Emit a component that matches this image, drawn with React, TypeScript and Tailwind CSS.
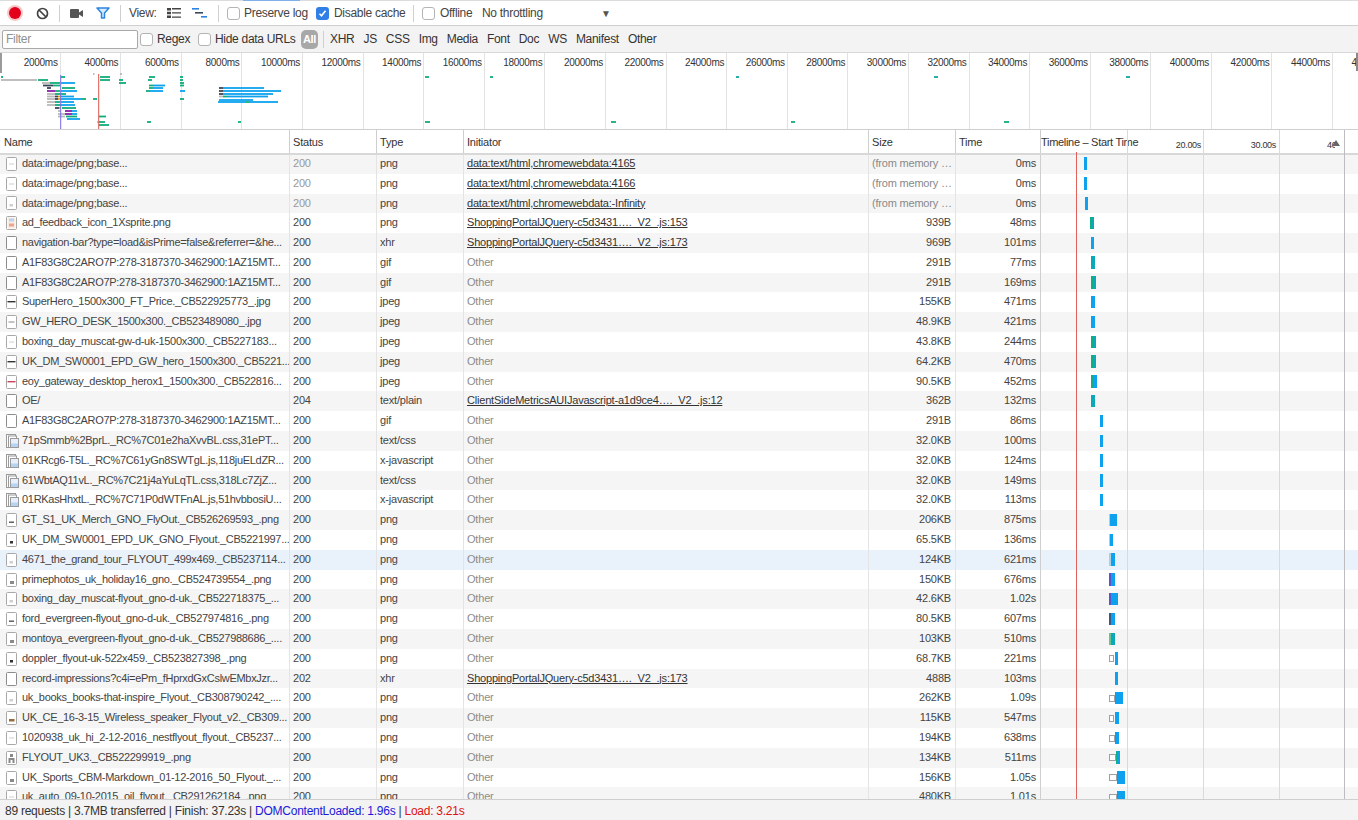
import React from 'react';

type Thumb = 'blank' | 'faint' | 'dash' | 'dark' | 'red' | 'sprite' | 'stack' | 'low' | 'mid' | 'dot' | 'bar' | 'orange' | 'person';
type Seg = [number, number, 'blue' | 'green' | 'teal' | 'purple' | 'dark' | 'pale' | 'box' | 'boxg'];

interface Req {
  name: string;
  status: string;
  type: string;
  initiator: string;
  size: string;
  time: string;
  thumb: Thumb;
  bars: Seg[];
}

const segClass = {
  blue: 'top-[3.5px] h-[12.5px] bg-[#0ea2ee]',
  green: 'top-[3.5px] h-[12.5px] bg-[#12ad80]',
  teal: 'top-[3.5px] h-[12.5px] bg-[#0aa8b8]',
  purple: 'top-[3.5px] h-[12.5px] bg-[#5a55c8]',
  dark: 'top-[3.5px] h-[12.5px] bg-[#3d5a80]',
  pale: 'top-[3.5px] h-[12.5px] bg-[#a9cfe0]',
  box: 'top-[6.5px] h-[7px] bg-white border border-[#a0a0a0]',
  boxg: 'top-[3.5px] h-[12.5px] bg-white border border-[#6cc08f]',
};

const shop153 = 'ShoppingPortalJQuery-c5d3431…._V2_.js:153';
const shop173 = 'ShoppingPortalJQuery-c5d3431…._V2_.js:173';
const tick: Seg[] = [[1100, 1103, 'blue']];

const requests: Req[] = [
  { name: 'data:image/png;base...', status: '200', type: 'png', initiator: 'data:text/html,chromewebdata:4165', size: '(from memory …', time: '0ms', thumb: 'faint', bars: [[1084, 1087, 'blue']] },
  { name: 'data:image/png;base...', status: '200', type: 'png', initiator: 'data:text/html,chromewebdata:4166', size: '(from memory …', time: '0ms', thumb: 'faint', bars: [[1084, 1087, 'blue']] },
  { name: 'data:image/png;base...', status: '200', type: 'png', initiator: 'data:text/html,chromewebdata:-Infinity', size: '(from memory …', time: '0ms', thumb: 'low', bars: [[1085, 1088, 'blue']] },
  { name: 'ad_feedback_icon_1Xsprite.png', status: '200', type: 'png', initiator: shop153, size: '939B', time: '48ms', thumb: 'sprite', bars: [[1090, 1092, 'green'], [1092, 1094, 'teal']] },
  { name: 'navigation-bar?type=load&isPrime=false&referrer=&he...', status: '200', type: 'xhr', initiator: shop173, size: '969B', time: '101ms', thumb: 'blank', bars: [[1091, 1094, 'blue']] },
  { name: 'A1F83G8C2ARO7P:278-3187370-3462900:1AZ15MT...', status: '200', type: 'gif', initiator: 'Other', size: '291B', time: '77ms', thumb: 'blank', bars: [[1091, 1095.3, 'teal']] },
  { name: 'A1F83G8C2ARO7P:278-3187370-3462900:1AZ15MT...', status: '200', type: 'gif', initiator: 'Other', size: '291B', time: '169ms', thumb: 'blank', bars: [[1091, 1093, 'green'], [1093, 1096, 'teal']] },
  { name: 'SuperHero_1500x300_FT_Price._CB522925773_.jpg', status: '200', type: 'jpeg', initiator: 'Other', size: '155KB', time: '471ms', thumb: 'dark', bars: [[1091, 1095.3, 'blue']] },
  { name: 'GW_HERO_DESK_1500x300._CB523489080_.jpg', status: '200', type: 'jpeg', initiator: 'Other', size: '48.9KB', time: '421ms', thumb: 'dash', bars: [[1091, 1095.3, 'blue']] },
  { name: 'boxing_day_muscat-gw-d-uk-1500x300._CB5227183...', status: '200', type: 'jpeg', initiator: 'Other', size: '43.8KB', time: '244ms', thumb: 'faint', bars: [[1091, 1093, 'green'], [1093, 1096, 'teal']] },
  { name: 'UK_DM_SW0001_EPD_GW_hero_1500x300._CB5221...', status: '200', type: 'jpeg', initiator: 'Other', size: '64.2KB', time: '470ms', thumb: 'dark', bars: [[1091, 1093, 'green'], [1093, 1096, 'teal']] },
  { name: 'eoy_gateway_desktop_herox1_1500x300._CB522816...', status: '200', type: 'jpeg', initiator: 'Other', size: '90.5KB', time: '452ms', thumb: 'red', bars: [[1091, 1093, 'green'], [1093, 1097, 'blue']] },
  { name: 'OE/', status: '204', type: 'text/plain', initiator: 'ClientSideMetricsAUIJavascript-a1d9ce4…._V2_.js:12', size: '362B', time: '132ms', thumb: 'blank', bars: [[1091, 1095, 'teal']] },
  { name: 'A1F83G8C2ARO7P:278-3187370-3462900:1AZ15MT...', status: '200', type: 'gif', initiator: 'Other', size: '291B', time: '86ms', thumb: 'blank', bars: tick },
  { name: '71pSmmb%2BprL._RC%7C01e2haXvvBL.css,31ePT...', status: '200', type: 'text/css', initiator: 'Other', size: '32.0KB', time: '100ms', thumb: 'stack', bars: tick },
  { name: '01KRcg6-T5L._RC%7C61yGn8SWTgL.js,118juELdZR...', status: '200', type: 'x-javascript', initiator: 'Other', size: '32.0KB', time: '124ms', thumb: 'stack', bars: tick },
  { name: '61WbtAQ11vL._RC%7C21j4aYuLqTL.css,318Lc7ZjZ...', status: '200', type: 'text/css', initiator: 'Other', size: '32.0KB', time: '149ms', thumb: 'stack', bars: tick },
  { name: '01RKasHhxtL._RC%7C71P0dWTFnAL.js,51hvbbosiU...', status: '200', type: 'x-javascript', initiator: 'Other', size: '32.0KB', time: '113ms', thumb: 'stack', bars: tick },
  { name: 'GT_S1_UK_Merch_GNO_FlyOut._CB526269593_.png', status: '200', type: 'png', initiator: 'Other', size: '206KB', time: '875ms', thumb: 'bar', bars: [[1109.3, 1110, 'pale'], [1110, 1116.7, 'blue']] },
  { name: 'UK_DM_SW0001_EPD_UK_GNO_Flyout._CB5221997...', status: '200', type: 'png', initiator: 'Other', size: '65.5KB', time: '136ms', thumb: 'dot', bars: [[1109.3, 1110.3, 'pale'], [1110.3, 1113, 'blue']] },
  { name: '4671_the_grand_tour_FLYOUT_499x469._CB5237114...', status: '200', type: 'png', initiator: 'Other', size: '124KB', time: '621ms', thumb: 'low', bars: [[1109.3, 1111, 'pale'], [1111, 1115, 'blue']] },
  { name: 'primephotos_uk_holiday16_gno._CB524739554_.png', status: '200', type: 'png', initiator: 'Other', size: '150KB', time: '676ms', thumb: 'mid', bars: [[1109.3, 1111, 'purple'], [1111, 1115, 'blue']] },
  { name: 'boxing_day_muscat-flyout_gno-d-uk._CB522718375_...', status: '200', type: 'png', initiator: 'Other', size: '42.6KB', time: '1.02s', thumb: 'low', bars: [[1109.3, 1111, 'purple'], [1111, 1117.7, 'blue']] },
  { name: 'ford_evergreen-flyout_gno-d-uk._CB527974816_.png', status: '200', type: 'png', initiator: 'Other', size: '80.5KB', time: '607ms', thumb: 'bar', bars: [[1109.3, 1111, 'dark'], [1111, 1115, 'blue']] },
  { name: 'montoya_evergreen-flyout_gno-d-uk._CB527988686_....', status: '200', type: 'png', initiator: 'Other', size: '103KB', time: '510ms', thumb: 'mid', bars: [[1109.3, 1111.3, 'boxg'], [1111.3, 1115, 'teal']] },
  { name: 'doppler_flyout-uk-522x459._CB523827398_.png', status: '200', type: 'png', initiator: 'Other', size: '68.7KB', time: '221ms', thumb: 'dot', bars: [[1109.3, 1114.5, 'box'], [1114.5, 1117.7, 'blue']] },
  { name: 'record-impressions?c4i=ePm_fHprxdGxCslwEMbxJzr...', status: '202', type: 'xhr', initiator: shop173, size: '488B', time: '103ms', thumb: 'blank', bars: [[1115, 1118, 'blue']] },
  { name: 'uk_books_books-that-inspire_Flyout._CB308790242_....', status: '200', type: 'png', initiator: 'Other', size: '262KB', time: '1.09s', thumb: 'low', bars: [[1109.3, 1114.7, 'box'], [1114.7, 1115.7, 'green'], [1115.7, 1123, 'blue']] },
  { name: 'UK_CE_16-3-15_Wireless_speaker_Flyout_v2._CB309...', status: '200', type: 'png', initiator: 'Other', size: '115KB', time: '547ms', thumb: 'orange', bars: [[1109.3, 1114.5, 'box'], [1114.5, 1118.7, 'blue']] },
  { name: '1020938_uk_hi_2-12-2016_nestflyout_flyout._CB5237...', status: '200', type: 'png', initiator: 'Other', size: '194KB', time: '638ms', thumb: 'faint', bars: [[1109.3, 1114.7, 'box'], [1114.7, 1115.7, 'green'], [1115.7, 1119.3, 'blue']] },
  { name: 'FLYOUT_UK3._CB522299919_.png', status: '200', type: 'png', initiator: 'Other', size: '134KB', time: '511ms', thumb: 'person', bars: [[1109.3, 1116, 'box'], [1116, 1117, 'green'], [1117, 1120.3, 'blue']] },
  { name: 'UK_Sports_CBM-Markdown_01-12-2016_50_Flyout._...', status: '200', type: 'png', initiator: 'Other', size: '156KB', time: '1.05s', thumb: 'mid', bars: [[1109.3, 1116.7, 'box'], [1116.7, 1117.7, 'green'], [1117.7, 1125, 'blue']] },
  { name: 'uk_auto_09-10-2015_oil_flyout._CB291262184_.png', status: '200', type: 'png', initiator: 'Other', size: '480KB', time: '1.01s', thumb: 'faint', bars: [[1109.3, 1117.3, 'box'], [1117.3, 1118, 'green'], [1118, 1125, 'blue']] },
];

const G = '#10ad7a';
const B = '#0ea2ee';
const K = '#3c4658';
const A = '#b8b8b8';
const O = '#e0a020';
const P = '#8a1fa8';

// x0, x1, y, colour (overview strip)
const overviewBars: [number, number, number, string][] = [
  [1, 3, 77, G], [61, 65, 77, G], [93, 94.5, 74, A], [100, 110, 77, G], [120, 122, 74, A], [149, 155, 77, G], [180, 183, 77, G],
  [425, 429, 77, G], [490, 493, 77, G], [736, 739, 77, '#0aa8a0'], [934, 938, 77, '#0aa8a0'], [1126, 1130, 77, '#0aa8a0'],
  [1, 37, 80, A], [38, 48, 80, G], [100, 110, 80, G], [119, 123, 80, G], [148, 152, 80, G], [180, 183, 80, G],
  [42, 50, 83, A], [50, 60, 83, G], [61, 75, 83, B], [119, 126, 83, G], [180, 184, 83, G],
  [43, 53, 85.5, K], [53, 60, 85.5, G], [149, 153, 85.5, G], [153, 165, 85.5, B], [180, 184, 85.5, G],
  [47, 51, 88, K], [62, 75, 88, G], [149, 153, 88, G], [153, 163, 88, B], [219, 223, 88, K], [223, 264, 88, B],
  [47, 55, 91, P], [55, 60, 91, G], [61, 77, 91, B], [146, 150, 91, G], [150, 163, 91, B], [180, 185, 91, B], [219, 223, 91, K], [223, 281, 91, B],
  [47, 55, 94, A], [55, 66, 94, G], [219, 223, 94, K], [223, 273, 94, B],
  [47, 55, 96.5, A], [55, 58, 96.5, K], [58, 61, 96.5, O], [61, 74, 96.5, B], [219, 223, 96.5, A], [223, 227, 96.5, G], [227, 268, 96.5, B],
  [47, 55, 99, A], [55, 58, 99, K], [58, 61, 99, O], [61, 82, 99, B], [82, 86, 99, G], [93, 97, 99, G], [180, 184, 99, G], [219, 253, 100, B],
  [47, 55, 102, A], [55, 60, 102, G], [61, 74, 102, B], [218, 246, 102, B], [246, 249, 102, G], [249, 278, 102, B],
  [47, 55, 105, A], [55, 61, 105, G], [61, 75, 105, B],
  [55, 59, 108, K], [59, 61, 108, O], [62, 76, 108, G],
  [58, 61, 111, A], [65, 72, 111, P], [72, 77, 111, B],
  [58, 65, 114, A], [65, 72, 114, P], [72, 77, 114, B],
  [58, 65, 116.5, A], [66, 77, 116.5, G], [99, 106, 116.5, G],
  [67, 80, 119, B],
  [97, 98, 122, A], [99, 105, 122, G], [147, 151, 122, G], [238, 241, 122, G], [425, 430, 122, G], [611, 616, 122, G], [791, 795, 122, G], [1004, 1009, 122, G],
  [99, 109, 125, G],
];

const ticks = Array.from({ length: 23 }, (_, i) => `${(i + 1) * 2000}ms`);
const filters = ['XHR', 'JS', 'CSS', 'Img', 'Media', 'Font', 'Doc', 'WS', 'Manifest', 'Other'];

const Check = ({ checked = false }: { checked?: boolean }) =>
  checked ? (
    <span className="w-[13px] h-[13px] rounded-[3px] bg-[#2f7fe6] flex items-center justify-center shrink-0">
      <svg width="9" height="9" viewBox="0 0 9 9" fill="none" stroke="white" strokeWidth="1.6">
        <path d="M1.5 4.8l2 2 4-5" />
      </svg>
    </span>
  ) : (
    <span className="block w-[13px] h-[13px] rounded-[3px] bg-white border border-[#b4b4b4] shrink-0" />
  );

const Sep = ({ className = '' }: { className?: string }) => <span className={`w-px h-[17px] bg-[#d0d0d0] shrink-0 ${className}`} />;

const FileThumb = ({ kind }: { kind: Thumb }) => {
  if (kind === 'stack') {
    return (
      <svg width="13" height="14" viewBox="0 0 13 14" className="block">
        <rect x="0.5" y="0.5" width="9" height="13" fill="#fff" stroke="#9a9a9a" />
        <rect x="2.5" y="2" width="8" height="11.5" fill="#fff" stroke="#9a9a9a" />
        <rect x="4.5" y="4.5" width="8" height="9" fill="#e6effb" stroke="#9a9a9a" />
        <rect x="5" y="9.5" width="7" height="3.5" fill="#b6d3f2" />
      </svg>
    );
  }
  return (
    <svg width="11" height="14" viewBox="0 0 11 14" className="block">
      <rect x="0.5" y="0.5" width="10" height="13" rx="1" fill="#fff" stroke={kind === 'blank' ? '#8c8c8c' : '#a8a8a8'} />
      {kind === 'faint' && <rect x="3" y="6.5" width="5" height="1" fill="#d0d0d0" />}
      {kind === 'dash' && <rect x="2.5" y="6.5" width="6" height="1" fill="#8a8a8a" />}
      {kind === 'dark' && <rect x="1.5" y="6" width="8" height="1.4" fill="#333" />}
      {kind === 'red' && <rect x="1.5" y="6" width="8" height="1.4" fill="#c8445a" />}
      {kind === 'low' && <rect x="3.5" y="8" width="3.5" height="2.5" fill="#d0d0d0" />}
      {kind === 'mid' && <rect x="4" y="8" width="4" height="3" fill="#8a8a8a" />}
      {kind === 'dot' && <rect x="4" y="8" width="3" height="2.5" fill="#333" />}
      {kind === 'bar' && <rect x="3" y="8.5" width="5" height="1.4" fill="#555" />}
      {kind === 'orange' && <rect x="3" y="8" width="5.5" height="2.5" fill="#9a6a3a" />}
      {kind === 'person' && <path d="M4 3h3v3H4zM2.5 7h6v5h-2V9h-2v3h-2z" fill="#888" />}
      {kind === 'sprite' && (
        <>
          <rect x="1.5" y="1.5" width="8" height="11" fill="#f7ede4" />
          <rect x="3" y="2.5" width="5" height="3" fill="#bcd3ee" />
          <rect x="3" y="7.5" width="5" height="3" fill="#eda38e" />
        </>
      )}
    </svg>
  );
};

const Toolbar = () => (
  <div className="h-[25px] flex items-center shrink-0 border-b border-[#cfcfcf] bg-white text-[12px] tracking-[-0.3px] text-[#444]">
    <span className="ml-[9px] w-[12px] h-[12px] rounded-full bg-[#e3001b] ring-2 ring-[#f8c8c8] shrink-0" />
    <svg width="13" height="13" viewBox="0 0 13 13" fill="none" stroke="#444" strokeWidth="1.7" className="ml-[15px] shrink-0">
      <circle cx="6.5" cy="6.5" r="5" />
      <path d="M3 3l7 7" />
    </svg>
    <Sep className="ml-[10px]" />
    <svg width="13" height="9" viewBox="0 0 13 9" fill="#555" className="ml-[10px] shrink-0">
      <rect x="0" y="0" width="9" height="9" rx="1" />
      <path d="M9 3.5L13 1v7L9 5.5z" />
    </svg>
    <svg width="14" height="12" viewBox="0 0 14 12" fill="#d8ecff" stroke="#2b84e0" strokeWidth="1.5" className="ml-[13px] shrink-0">
      <path d="M1 1h12L8.5 6v5h-3V6z" strokeLinejoin="round" />
    </svg>
    <Sep className="ml-[10px]" />
    <span className="ml-[8px] w-[38px]">View:</span>
    <svg width="14" height="10" viewBox="0 0 14 10" fill="#444" className="shrink-0">
      <path d="M0 0h4v2.5H0zM0 3.7h4v2.5H0zM0 7.5h4V10H0zM5 0h9v1.4H5zM5 4.2h9v1.4H5zM5 8.4h9v1.4H5z" />
    </svg>
    <svg width="15" height="10" viewBox="0 0 15 10" className="ml-[11px] shrink-0">
      <path d="M0 0h7v1.6H0z" fill="#2b84e0" />
      <path d="M3 4h8v1.6H3z" fill="#3b4a5a" />
      <path d="M9 8h6v1.6H9z" fill="#2b84e0" />
    </svg>
    <Sep className="ml-[11px]" />
    <span className="ml-[8px]"><Check /></span>
    <span className="ml-[4px] w-[72px] whitespace-nowrap">Preserve log</span>
    <Check checked />
    <span className="ml-[5px] w-[79px] whitespace-nowrap">Disable cache</span>
    <Sep />
    <span className="ml-[8px]"><Check /></span>
    <span className="ml-[5px] w-[42px] whitespace-nowrap">Offline</span>
    <span className="whitespace-nowrap w-[119px]">No throttling</span>
    <span className="text-[10px] text-[#555]">▼</span>
  </div>
);

const FilterBar = () => (
  <div className="h-[27px] flex items-center shrink-0 bg-[#f3f3f3] border-b border-[#d8d8d8] text-[12px] tracking-[-0.3px] text-[#333]">
    <div className="ml-[2px] w-[136px] h-[19px] bg-white border border-[#a9a9a9] rounded-[2px] pl-[3px] leading-[17px] text-[#8f8f8f] shrink-0">Filter</div>
    <span className="ml-[2px]"><Check /></span>
    <span className="ml-[4px] w-[41px]">Regex</span>
    <Check />
    <span className="ml-[4px] w-[86px] whitespace-nowrap">Hide data URLs</span>
    <span className="w-[17px] h-[19px] rounded-[5px] bg-[#a8a8a8] text-white text-center leading-[19px] font-bold text-[11px] shrink-0">All</span>
    <Sep className="ml-[5px]" />
    <div className="ml-[6px] flex gap-[9px] whitespace-nowrap">
      {filters.map((f) => (
        <span key={f}>{f}</span>
      ))}
    </div>
  </div>
);

const Overview = () => (
  <div className="relative h-[77px] shrink-0 bg-white border-b border-[#cfcfcf] overflow-hidden">
    <div className="flex h-full">
      {ticks.map((t) => (
        <div key={t} className="w-[60.6px] shrink-0 border-r border-[#e2e2e2] text-right pr-[2px] pt-[3px] text-[10px] tracking-[-0.3px] leading-[13px] text-[#333]">
          {t}
        </div>
      ))}
    </div>
    <svg className="absolute left-0 top-0" width="1358" height="77" viewBox="0 53 1358 77">
      {overviewBars.map(([a, b, y, c], i) => (
        <rect key={i} x={a} y={y - 0.9} width={b - a} height={1.8} fill={c} />
      ))}
      <rect x="60.2" y="75" width="1" height="54" fill="#7a6cf0" />
      <rect x="98.2" y="74" width="1" height="55" fill="#e0554a" />
    </svg>
    <span className="absolute left-0 top-0 w-[2px] h-[20px] bg-[#9a9a9a]" />
    <span className="absolute right-0 top-0 w-[2px] h-[18px] bg-[#8a8a8a]" />
  </div>
);

const HeaderCell = ({ label, className }: { label: string; className: string }) => (
  <div className={`border-r border-[#cfcfcf] leading-[24px] shrink-0 ${className}`}>{label}</div>
);

const TableHeader = () => (
  <div className="relative z-10 h-[25px] flex shrink-0 bg-white border-b-2 border-[#d8d8d8] text-[11px] tracking-[-0.2px] text-[#333]">
    <HeaderCell label="Name" className="w-[290px] pl-[4px]" />
    <HeaderCell label="Status" className="w-[87px] pl-[3px]" />
    <HeaderCell label="Type" className="w-[87px] pl-[3px]" />
    <HeaderCell label="Initiator" className="w-[405px] pl-[3px]" />
    <HeaderCell label="Size" className="w-[87px] pl-[3px]" />
    <HeaderCell label="Time" className="w-[85px] pl-[3px]" />
    <div className="relative flex-1 leading-[24px] whitespace-nowrap tracking-[-0.3px]">
      Timeline – Start Time
      <span className="absolute right-[157px] top-[3px] text-[9px]">20.00s</span>
      <span className="absolute right-[82px] top-[3px] text-[9px]">30.00s</span>
      <span className="absolute right-[23px] top-[3px] text-[9px] w-[8px] overflow-hidden">40</span>
      <span className="absolute right-[18px] top-[10px] w-0 h-0 border-x-[4px] border-x-transparent border-b-[6px] border-b-[#666]" />
    </div>
  </div>
);

const Row = ({ req, index }: { req: Req; index: number }) => {
  const hovered = index === 20;
  const muted = req.size.startsWith('(');
  const bg = hovered ? 'bg-[#e9f1fb]' : index % 2 === 0 ? 'bg-[#f5f5f5]' : 'bg-white';
  return (
    <div className={`h-[19.8px] flex shrink-0 text-[11px] tracking-[-0.2px] leading-[19.8px] text-[#444] ${bg}`}>
      <div className="w-[290px] shrink-0 border-r border-[#e4e4e4] pl-[6px] flex items-center whitespace-nowrap overflow-hidden tracking-[-0.3px]">
        <span className="w-[16px] shrink-0">
          <FileThumb kind={req.thumb} />
        </span>
        <span>{req.name}</span>
      </div>
      <div className={`w-[87px] shrink-0 border-r border-[#e4e4e4] pl-[3px] ${muted ? 'text-[#999]' : ''}`}>{req.status}</div>
      <div className="w-[87px] shrink-0 border-r border-[#e4e4e4] pl-[3px]">{req.type}</div>
      <div className="w-[405px] shrink-0 border-r border-[#e4e4e4] pl-[3px] whitespace-nowrap">
        {req.initiator === 'Other' ? <span className="text-[#8c8c8c]">Other</span> : <span className="underline text-[#333]">{req.initiator}</span>}
      </div>
      <div className={`w-[87px] shrink-0 border-r border-[#e4e4e4] whitespace-nowrap overflow-hidden ${muted ? 'pl-[3px] text-[#888]' : 'pr-[4px] text-right'}`}>{req.size}</div>
      <div className="w-[85px] shrink-0 border-r border-[#cfcfcf] pr-[4px] text-right">{req.time}</div>
      <div className="relative flex-1">
        {req.bars.map(([a, b, kind], i) => (
          <span key={i} className={`absolute ${segClass[kind]}`} style={{ left: a - 1041, width: b - a }} />
        ))}
      </div>
    </div>
  );
};

const App = () => (
  <div className="w-[1358px] h-[820px] flex flex-col overflow-hidden bg-white font-['Liberation_Sans',Arial,sans-serif]">
    <div className="h-px shrink-0 bg-[#dcdcdc] flex">
      <span className="ml-[243px] w-[57px] bg-[#7fb0ea]" />
    </div>
    <Toolbar />
    <FilterBar />
    <Overview />
    <div className="relative flex-1 min-h-0 flex flex-col overflow-hidden">
      <TableHeader />
      <div className="flex-1 min-h-0 overflow-hidden -mt-[1.1px]">
        {requests.map((r, i) => (
          <Row key={i} req={r} index={i} />
        ))}
      </div>
      <span className="absolute z-20 left-[1127px] top-0 bottom-0 w-px bg-[#dadada]" />
      <span className="absolute z-20 left-[1203px] top-0 bottom-0 w-px bg-[#dadada]" />
      <span className="absolute z-20 left-[1279px] top-0 bottom-0 w-px bg-[#dadada]" />
      <span className="absolute z-20 left-[1344px] top-0 bottom-0 w-px bg-[#bdbdbd]" />
      <span className="absolute z-20 left-[1076px] top-[22px] bottom-0 w-px bg-[#e0605a]" />
    </div>
    <div className="h-[21px] shrink-0 bg-[#f3f3f3] border-t border-[#cfcfcf] pl-[5px] text-[12px] tracking-[-0.25px] leading-[22px] text-[#333] whitespace-nowrap">
      89 requests | 3.7MB transferred | Finish: 37.23s | <span className="text-[#1a1ad8]">DOMContentLoaded: 1.96s</span> | <span className="text-[#e01010]">Load: 3.21s</span>
    </div>
  </div>
);

export default App;
